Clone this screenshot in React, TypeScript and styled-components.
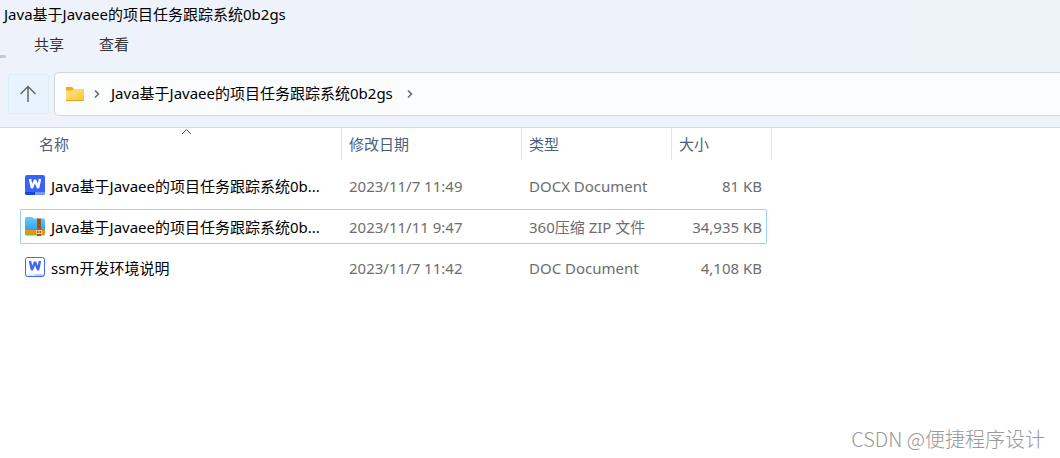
import React from "react";
import styled, { createGlobalStyle } from "styled-components";

const GlobalStyle = createGlobalStyle`
  * { box-sizing: border-box; }
  body {
    margin: 0;
    background: #fff;
    color: #000;
    font-family: "Noto Sans", "Noto Sans CJK SC", sans-serif;
    font-size: 15px;
    line-height: 20px;
  }
  button {
    font: inherit;
    color: inherit;
    background: none;
    border: 0;
    padding: 0;
    cursor: default;
  }
`;

const Window = styled.div`
  display: flex;
  flex-direction: column;
  min-height: 100vh;
`;

const Chrome = styled.header`
  background: linear-gradient(100deg, #eef3fb 78%, #eef3f8 88%);
  border-bottom: 1px solid #d6dadf;
`;

const Title = styled.h1`
  margin: 0;
  padding: 4px 4px 5px;
  font-size: 15px;
  font-weight: 400;
  line-height: 20px;
`;

const Ribbon = styled.nav`
  display: flex;
  align-items: center;
  height: 30px;
  color: #333;
`;

const ActiveTabMark = styled.span`
  align-self: flex-end;
  width: 6px;
  height: 3px;
  margin-bottom: 1px;
  border-radius: 0 2px 2px 0;
  background: #ccc9cb;
`;

const Tab = styled.button`
  width: 65px;
  padding-left: 5px;
  text-align: center;
`;

const Tabs = styled.div`
  display: flex;
  padding-left: 8px;
`;

const AddressRow = styled.div`
  display: flex;
  align-items: center;
  gap: 5px;
  padding: 13px 0 11px 8px;
`;

const UpButton = styled.button`
  display: grid;
  place-items: center;
  width: 41px;
  height: 40px;
  padding-right: 2px;
  border: 1px solid #d9eefd;
  border-radius: 3px;
  background: #e8f3fd;
`;

const AddressBar = styled.div`
  display: flex;
  flex: 1;
  align-items: center;
  height: 44px;
  padding: 0 0 1px 10px;
  border: 1px solid #d4d7db;
  border-right: 0;
  border-radius: 5px 0 0 5px;
  background: #fbfcfe;
`;

const Crumb = styled.button`
  padding: 0 4px 2px 1px;
`;

const Chevron = styled.svg`
  width: 8px;
  height: 10px;
  margin: 0 9px;
`;

const FileTable = styled.table`
  width: 752px;
  margin-left: 20px;
  border-collapse: collapse;
  table-layout: fixed;
`;

const HeadCell = styled.th<{ $width: number }>`
  width: ${(p) => p.$width}px;
  padding: 0 0 5px;
  font-weight: 400;
  text-align: left;
`;

const HeadButton = styled.button<{ $first?: boolean }>`
  position: relative;
  display: block;
  width: 100%;
  height: 32px;
  padding-left: ${(p) => (p.$first ? 19 : 7)}px;
  border-right: 1px solid #e2e3e5;
  color: #4c607a;
  text-align: left;
`;

const SortMark = styled.svg`
  position: absolute;
  top: 0;
  left: 161px;
  width: 11px;
  height: 7px;
`;

const Cell = styled.td`
  padding: 3px 0;
`;

const CellBox = styled.div<{ $selected?: boolean; $edge?: "start" | "end" }>`
  display: flex;
  align-items: center;
  gap: 5px;
  height: 35px;
  padding-left: ${(p) => (p.$edge === "start" ? 4 : 7)}px;
  border: 0 solid ${(p) => (p.$selected ? "#99d1ff" : "transparent")};
  border-width: 1px 0;
  color: #6d6d6d;
  white-space: nowrap;
  ${(p) =>
    p.$edge === "start" &&
    `
    border-left-width: 1px;
    border-radius: 2px 0 0 2px;
    color: #000;
  `}
  ${(p) =>
    p.$edge === "end" &&
    `
    justify-content: flex-end;
    margin-right: 5px;
    padding-right: 4px;
    border-right-width: 1px;
    border-radius: 0 2px 2px 0;
  `}
`;

const FileIcon = styled.svg`
  flex: none;
  width: 21px;
  height: 22px;
`;

const Watermark = styled.footer`
  margin-top: auto;
  padding: 0 15px 7px;
  color: #999;
  font-family: "Noto Sans CJK SC", sans-serif;
  font-size: 20px;
  font-weight: 300;
  line-height: 24px;
  text-align: right;
`;

type Kind = "docx" | "zip" | "doc";

function KindIcon({ kind }: { kind: Kind }) {
  if (kind === "zip") {
    return (
      <FileIcon viewBox="0 0 21 22" aria-hidden="true">
        <defs>
          <linearGradient id="zip-blue" x2="0" y2="1">
            <stop stopColor="#66cdf8" />
            <stop offset="1" stopColor="#2ea4e5" />
          </linearGradient>
        </defs>
        <path d="M0 15h20v3a1.500 1.500 0 0 1-1.500 1.500h-17A1.500 1.500 0 0 1 0 18z" fill="#7cc02c" />
        <path d="M0 13h20v4H2a2 2 0 0 1-2-2z" fill="#f78b1c" />
        <path d="M0 2.500A1.500 1.500 0 0 1 1.500 1H7l2 1.500h9.500A1.500 1.500 0 0 1 20 4v10H1.500A1.500 1.500 0 0 1 0 12.500z" fill="url(#zip-blue)" />
        <path d="M12 2.500h4V20h-4z" fill="#a9531d" />
        <path d="M14 4v9" stroke="#7d3b13" strokeDasharray="1 2" />
        <path d="M11.500 14.500h5v3h-5z" fill="#a9531d" stroke="#ffd08a" />
        <path d="M14 14v4" stroke="#ffd08a" />
      </FileIcon>
    );
  }
  const solid = kind === "docx";
  return (
    <FileIcon viewBox="0 0 21 22" aria-hidden="true">
      {solid ? (
        <>
          <rect width="20" height="20" rx="2" fill="#3a62f7" />
          <path d="M0 17h10v3H2a2 2 0 0 1-2-2z" fill="#0d4bd8" />
          <path d="M10 17h10v1a2 2 0 0 1-2 2h-8z" fill="#759afb" />
        </>
      ) : (
        <>
          <rect x="0.500" y="0.500" width="19" height="19" rx="2" fill="#fff" />
          <path d="M1 17h9v2.500H1z" fill="#e2eafd" />
          <path d="M10 17h9v2.500h-9z" fill="#b9cbfb" />
          <rect x="0.500" y="0.500" width="19" height="19" rx="2" fill="none" stroke="#3f66f5" />
        </>
      )}
      <path
        d="M5 4l1.900 9L10 5l3.100 8L15 4"
        fill="none"
        stroke={solid ? "#fff" : "#3f66f5"}
        strokeWidth="2.400"
        strokeLinejoin="bevel"
      />
    </FileIcon>
  );
}

function Separator() {
  return (
    <Chevron viewBox="0 0 8 10" aria-hidden="true">
      <path d="M2 1.500 5.500 5 2 8.500" fill="none" stroke="#666" strokeWidth="1.500" />
    </Chevron>
  );
}

const PROJECT = "Java基于Javaee的项目任务跟踪系统0b2gs";
const PROJECT_SHORT = "Java基于Javaee的项目任务跟踪系统0b...";

const columns = [
  { label: "名称", width: 322 },
  { label: "修改日期", width: 180 },
  { label: "类型", width: 150 },
  { label: "大小", width: 100 },
];

const files: { name: string; kind: Kind; date: string; type: string; size: string; selected?: boolean }[] = [
  { name: PROJECT_SHORT, kind: "docx", date: "2023/11/7 11:49", type: "DOCX Document", size: "81 KB" },
  { name: PROJECT_SHORT, kind: "zip", date: "2023/11/11 9:47", type: "360压缩 ZIP 文件", size: "34,935 KB", selected: true },
  { name: "ssm开发环境说明", kind: "doc", date: "2023/11/7 11:42", type: "DOC Document", size: "4,108 KB" },
];

export default function App() {
  return (
    <Window>
      <GlobalStyle />
      <Chrome>
        <Title>{PROJECT}</Title>
        <Ribbon>
          <ActiveTabMark />
          <Tabs>
            <Tab type="button">共享</Tab>
            <Tab type="button">查看</Tab>
          </Tabs>
        </Ribbon>
        <AddressRow>
          <UpButton type="button" aria-label="向上">
            <svg width="18" height="18" viewBox="0 0 18 18" aria-hidden="true">
              <path d="M9 17V1.500M1.500 9 9 1.500 16.500 9" fill="none" stroke="#666" strokeWidth="1.500" />
            </svg>
          </UpButton>
          <AddressBar>
            <svg width="19" height="16" viewBox="0 0 19 16" aria-hidden="true">
              <defs>
                <linearGradient id="folder" x2="1" y2="1">
                  <stop stopColor="#ffe391" />
                  <stop offset="1" stopColor="#fdc536" />
                </linearGradient>
              </defs>
              <path d="M1 1h6l2 2h9v4H1z" fill="#f3a914" />
              <path d="M1 4.500h6L8.500 3H19v11.500H1z" fill="url(#folder)" />
              <path d="M1 14h18v1H1z" fill="#e8a21b" />
            </svg>
            <Separator />
            <Crumb type="button">{PROJECT}</Crumb>
            <Separator />
          </AddressBar>
        </AddressRow>
      </Chrome>
      <main>
        <FileTable>
          <thead>
            <tr>
              {columns.map((column, i) => (
                <HeadCell key={column.label} $width={column.width} scope="col">
                  <HeadButton type="button" $first={i === 0}>
                    {column.label}
                    {i === 0 && (
                      <SortMark viewBox="0 0 11 7" aria-hidden="true">
                        <path d="M1 6l4.500-4.500L10 6" fill="none" stroke="#555" />
                      </SortMark>
                    )}
                  </HeadButton>
                </HeadCell>
              ))}
            </tr>
          </thead>
          <tbody>
            {files.map((file) => (
              <tr key={file.kind}>
                <Cell>
                  <CellBox $selected={file.selected} $edge="start">
                    <KindIcon kind={file.kind} />
                    <span>{file.name}</span>
                  </CellBox>
                </Cell>
                <Cell>
                  <CellBox $selected={file.selected}>{file.date}</CellBox>
                </Cell>
                <Cell>
                  <CellBox $selected={file.selected}>{file.type}</CellBox>
                </Cell>
                <Cell>
                  <CellBox $selected={file.selected} $edge="end">
                    {file.size}
                  </CellBox>
                </Cell>
              </tr>
            ))}
          </tbody>
        </FileTable>
      </main>
      <Watermark>CSDN @便捷程序设计</Watermark>
    </Window>
  );
}
